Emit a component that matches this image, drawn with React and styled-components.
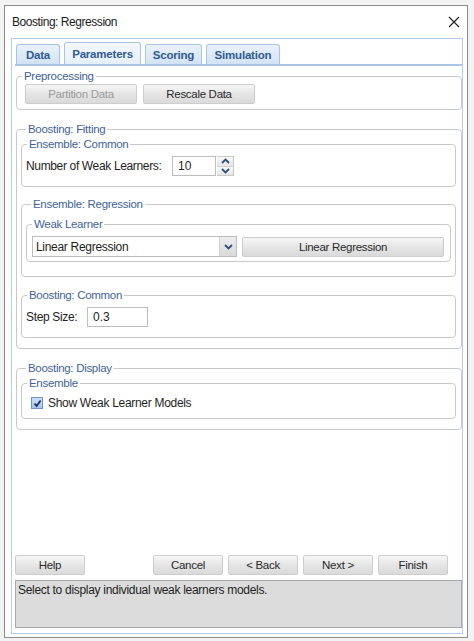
import React from 'react';
import styled, { createGlobalStyle } from 'styled-components';

const GlobalStyle = createGlobalStyle`
  html, body {
    margin: 0;
    padding: 0;
    background: #f3f3f3;
    font-family: "Liberation Sans", Arial, sans-serif;
  }
`;

const tabs = [
  { name: 'Data', w: 44 },
  { name: 'Parameters', w: 77 },
  { name: 'Scoring', w: 57 },
  { name: 'Simulation', w: 74 },
];

const Chevron = ({ up }) => (
  <svg width="9" height="6" viewBox="0 0 9 6">
    <path
      d={up ? 'M1 5 L4.5 1.5 L8 5' : 'M1 1 L4.5 4.5 L8 1'}
      fill="none"
      stroke="#2e4f7c"
      strokeWidth="1.8"
    />
  </svg>
);

const App = () => {
  return (
    <>
      <GlobalStyle />
      <Window>
        <TitleBar>
          <span>Boosting: Regression</span>
          <svg width="12" height="12" viewBox="0 0 12 12">
            <path d="M1 1 L11 11 M11 1 L1 11" stroke="#222" strokeWidth="1.2" />
          </svg>
        </TitleBar>
        <Panel>
          <TabStrip>
            {tabs.map((t) => (
              <Tab key={t.name} w={t.w} active={t.name === 'Parameters'}>{t.name}</Tab>
            ))}
          </TabStrip>
          <Content>
            <Group>
              <Legend>Preprocessing</Legend>
              <Row gap={6} pad="1px 8px 5px 8px">
                <Button disabled w={112}>Partition Data</Button>
                <Button w={112}>Rescale Data</Button>
              </Row>
            </Group>

            <Group pad="1px 5px 10px 4px" top={12}>
              <Legend>Boosting: Fitting</Legend>
              <Stack>
                <Group>
                  <Legend>Ensemble: Common</Legend>
                  <Row pad="5px 4px 10px 4px">
                    <Label w={146}>Number of Weak Learners:</Label>
                    <SpinBox>
                      <Input as="div" w={44}>10</Input>
                      <Spinner>
                        <SpinBtn><Chevron up /></SpinBtn>
                        <SpinBtn><Chevron /></SpinBtn>
                      </Spinner>
                    </SpinBox>
                  </Row>
                </Group>

                <Group pad="6px 4px 14px 4px" top={10}>
                  <Legend>Ensemble: Regression</Legend>
                  <Group>
                    <Legend>Weak Learner</Legend>
                    <Row gap={5} pad="5px 6px 4px 5px">
                      <Select>
                        <span>Linear Regression</span>
                        <SelectArrow><Chevron /></SelectArrow>
                      </Select>
                      <Button grow>Linear Regression</Button>
                    </Row>
                  </Group>
                </Group>

                <Group top={11}>
                  <Legend>Boosting: Common</Legend>
                  <Row pad="5px 4px 10px 4px">
                    <Label w={61}>Step Size:</Label>
                    <Input as="div" w={61}>0.3</Input>
                  </Row>
                </Group>
              </Stack>
            </Group>

            <Group pad="1px 5px 10px 4px" top={12}>
              <Legend>Boosting: Display</Legend>
              <Group>
                <Legend>Ensemble</Legend>
                <Row gap={5} pad="6px 9px 8px 9px">
                  <Check>
                    <svg width="9" height="9" viewBox="0 0 9 9">
                      <path d="M1.5 4.5 L3.6 7 L7.6 1.4" fill="none" stroke="#1a2e5a" strokeWidth="1.7" />
                    </svg>
                  </Check>
                  <CheckText>Show Weak Learner Models</CheckText>
                </Row>
              </Group>
            </Group>
          </Content>

          <Footer>
            <Button w={70}>Help</Button>
            <Spacer />
            <Button w={70}>Cancel</Button>
            <Button w={70}>&lt; Back</Button>
            <Button w={70}>Next &gt;</Button>
            <Button w={70}>Finish</Button>
          </Footer>
          <Status>Select to display individual weak learners models.</Status>
        </Panel>
      </Window>
    </>
  );
};
export default App;

const Window = styled.div`
  box-sizing: border-box;
  margin: 5px 0 0 4px;
  width: 464px;
  height: 633px;
  background: #fff;
  border: 1px solid #8d8d8d;
  display: flex;
  flex-direction: column;
`;

const TitleBar = styled.div`
  height: 32px;
  display: flex;
  align-items: center;
  justify-content: space-between;
  padding: 0 7px 0 7px;
  font-size: 12px;
  letter-spacing: -0.45px;
  color: #1b1b1b;
`;

const Panel = styled.div`
  flex: 1;
  margin: 0 4px 3px 6px;
  border: 1px solid #b4cde8;
  display: flex;
  flex-direction: column;
  padding: 3px 0 5px 3px;
`;

const TabStrip = styled.div`
  display: flex;
  align-items: flex-end;
  gap: 4px;
  height: 22px;
  border-bottom: 2px solid #a9c6e6;
  padding-left: 1px;
`;

const Tab = styled.div`
  box-sizing: border-box;
  width: ${(p) => p.w}px;
  height: ${(p) => (p.active ? 22 : 20)}px;
  display: flex;
  align-items: center;
  justify-content: center;
  font-size: 11.5px;
  font-weight: bold;
  letter-spacing: -0.2px;
  color: #2f5b93;
  border: 1px solid #a9c4e4;
  border-bottom: none;
  border-radius: 3px 3px 0 0;
  background: ${(p) =>
    p.active
      ? 'linear-gradient(#f4f8fd, #e6eff9)'
      : 'linear-gradient(#e9f1fa, #d3e3f5)'};
`;

const Content = styled.div`
  flex: 1;
  display: flex;
  flex-direction: column;
  padding: 3px 0 0 1px;
`;

const Stack = styled.div`
  display: flex;
  flex-direction: column;
`;

const Group = styled.fieldset`
  margin: ${(p) => p.top || 0}px 0 0 0;
  padding: ${(p) => p.pad || '0'};
  border: 1px solid #c9c9c9;
  border-radius: 4px;
  min-width: 0;
`;

const Legend = styled.legend`
  padding: 0 2px;
  margin-left: 5px;
  font-size: 11.5px;
  letter-spacing: -0.3px;
  line-height: 14px;
  color: #40639a;
`;

const Row = styled.div`
  display: flex;
  align-items: center;
  gap: ${(p) => p.gap || 0}px;
  padding: ${(p) => p.pad || '0'};
`;

const Button = styled.div`
  box-sizing: border-box;
  width: ${(p) => (p.w ? p.w + 'px' : 'auto')};
  flex: ${(p) => (p.grow ? 1 : 'none')};
  height: 20px;
  display: flex;
  align-items: center;
  justify-content: center;
  font-size: 11.5px;
  letter-spacing: -0.3px;
  color: ${(p) => (p.disabled ? '#9a9a9a' : '#2a2a2a')};
  border: 1px solid #cdcdcd;
  border-radius: 2px;
  background: linear-gradient(#f6f6f6, #e4e4e4 55%, #dadada);
`;

const Label = styled.div`
  width: ${(p) => p.w}px;
  flex: none;
  white-space: nowrap;
  font-size: 12px;
  letter-spacing: -0.35px;
  color: #1e1e1e;
`;

const SpinBox = styled.div`
  display: flex;
  align-items: stretch;
`;

const Input = styled.input`
  box-sizing: border-box;
  width: ${(p) => p.w}px;
  height: 20px;
  border: 1px solid #bdbdbd;
  background: #fff;
  display: flex;
  align-items: center;
  padding-left: 5px;
  font-size: 12px;
  color: #1e1e1e;
`;

const Spinner = styled.div`
  display: flex;
  flex-direction: column;
  width: 16px;
  border: 1px solid #c9c9c9;
  border-left: none;
  margin-left: 1px;
`;

const SpinBtn = styled.div`
  flex: 1;
  display: flex;
  align-items: center;
  justify-content: center;
  background: linear-gradient(#f7f7f7, #e6e6e6);
  & + & { border-top: 1px solid #d4d4d4; }
`;

const Select = styled.div`
  box-sizing: border-box;
  width: 205px;
  height: 21px;
  display: flex;
  align-items: center;
  justify-content: space-between;
  border: 1px solid #bcbcbc;
  background: #fff;
  padding-left: 3px;
  font-size: 12px;
  letter-spacing: -0.3px;
  color: #1e1e1e;
`;

const SelectArrow = styled.div`
  width: 16px;
  height: 100%;
  display: flex;
  align-items: center;
  justify-content: center;
  background: linear-gradient(#ededed, #d9d9d9);
  border-left: 1px solid #cfcfcf;
`;

const Check = styled.div`
  box-sizing: border-box;
  width: 12px;
  height: 12px;
  border: 1px solid #6f93c6;
  background: linear-gradient(#cfe0f5, #a9c6ea);
  display: flex;
  align-items: center;
  justify-content: center;
`;

const CheckText = styled.div`
  font-size: 12px;
  letter-spacing: -0.3px;
  color: #1e1e1e;
`;

const Footer = styled.div`
  display: flex;
  gap: 5px;
  padding: 0 14px 5px 0;
`;

const Spacer = styled.div`
  flex: 1;
`;

const Status = styled.div`
  box-sizing: border-box;
  height: 48px;
  border: 1px solid #a8a8a8;
  background: #dcdcdc;
  padding: 2px 2px;
  font-size: 12px;
  letter-spacing: -0.3px;
  color: #1e1e1e;
`;
